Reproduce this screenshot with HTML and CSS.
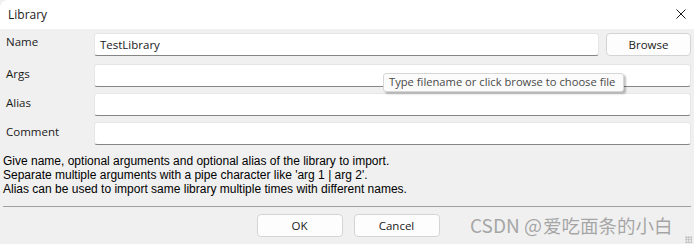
FILE: index.html
```html
<!DOCTYPE html>
<html lang="en">
<head>
  <meta charset="UTF-8" />
  <title>Library</title>
  <link rel="stylesheet" href="styles.css">
</head>
<body>
  <div class="ventana">
    <div class="barra-titulo">
      <span class="titulo">Library</span>
      <svg class="cerrar" width="10" height="10" viewBox="0 0 10 10">
        <path d="M0.5 0.5 L9.5 9.5 M9.5 0.5 L0.5 9.5" stroke="#1a1a1a" stroke-width="1" fill="none"/>
      </svg>
    </div>

    <div class="contenido">
      <div class="campos">
        <label class="etiqueta fila-nombre">Name</label>
        <input class="caja fila-nombre" type="text" value="TestLibrary">
        <button class="boton fila-nombre">Browse</button>

        <label class="etiqueta">Args</label>
        <input class="caja ancha" type="text">

        <label class="etiqueta">Alias</label>
        <input class="caja ancha" type="text">

        <label class="etiqueta">Comment</label>
        <input class="caja ancha" type="text">
      </div>

      <p class="ayuda">
        Give name, optional arguments and optional alias of the library to import.<br>
        Separate multiple arguments with a pipe character like 'arg 1 | arg 2'.<br>
        Alias can be used to import same library multiple times with different names.
      </p>

      <div class="botones">
        <button class="boton">OK</button>
        <button class="boton">Cancel</button>
      </div>
    </div>

    <div class="tooltip">Type filename or click browse to choose file</div>
    <div class="marca">CSDN @<span class="marca-cjk">爱吃面条的小白</span></div>
    <div class="agarre"></div>
  </div>
</body>
</html>
```

FILE: styles.css
```css
html, body {
  margin: 0;
  padding: 0;
  background: #f0f0f0;
}

.ventana {
  position: relative;
  width: 694px;
  height: 244px;
  background: #f0f0f0;
  border-radius: 8px 0 0 8px;
  overflow: hidden;
  font-family: 'Open Sans', 'Noto Sans', sans-serif;
  font-size: 11.5px;
  color: #1a1a1a;
}

.barra-titulo {
  display: flex;
  align-items: center;
  justify-content: space-between;
  height: 29px;
  padding: 0 8px 0 8px;
  background: #ffffff;
  box-sizing: border-box;
}

.titulo {
  font-size: 12px;
  margin-top: -1px;
}

.cerrar {
  margin-top: -1px;
}

.contenido {
  padding: 4px 3px 0 3px;
}

.campos {
  display: grid;
  grid-template-columns: 81px 1fr 85px;
  column-gap: 7px;
  row-gap: 6px;
  padding-left: 3px;
}

.etiqueta {
  align-self: center;
  margin-top: -4px;
}

.fila-nombre {
  margin-bottom: 2px;
}

.etiqueta.fila-nombre {
  margin-top: -6px;
}

.caja {
  height: 23px;
  margin: 0;
  padding: 0 5px;
  border: 1px solid #e6e6e6;
  border-bottom: 1px solid #858585;
  border-radius: 3px;
  background: #ffffff;
  font-family: 'Open Sans', 'Noto Sans', sans-serif;
  font-size: 11.5px;
  color: #1a1a1a;
  box-sizing: border-box;
  outline: none;
}

.caja.ancha {
  grid-column: 2 / 4;
}

.boton {
  height: 23px;
  padding: 0;
  border: 1px solid #d4d4d4;
  border-radius: 4px;
  background: #fdfdfd;
  font-family: 'Open Sans', 'Noto Sans', sans-serif;
  font-size: 11.5px;
  color: #1a1a1a;
}

.ayuda {
  margin: 9px 0 0 0;
  font-family: 'Liberation Sans', Arial, sans-serif;
  font-size: 12px;
  line-height: 14px;
  color: #000000;
  padding-bottom: 10px;
  border-bottom: 1px solid #a0a0a0;
}

.botones {
  display: flex;
  justify-content: center;
  gap: 11px;
  padding-top: 7px;
  padding-left: 2px;
}

.botones .boton {
  width: 86px;
}

.tooltip {
  position: absolute;
  left: 383px;
  top: 73px;
  width: 241px;
  height: 19px;
  box-sizing: border-box;
  background: #fbfbfb;
  border: 1px solid #d6d6d6;
  border-radius: 3px;
  box-shadow: 2px 2px 2px rgba(0, 0, 0, 0.25);
  color: #4a4a4a;
  font-size: 11.2px;
  line-height: 16px;
  padding-left: 5px;
  white-space: nowrap;
}

.marca {
  position: absolute;
  left: 470px;
  top: 211px;
  font-family: 'Noto Sans CJK SC', sans-serif;
  font-size: 19px;
  color: rgba(140, 140, 140, 0.75);
  white-space: nowrap;
}

.marca-cjk {
  font-size: 18.5px;
  margin-left: 1px;
}

.agarre {
  position: absolute;
  right: 2px;
  bottom: 1px;
  width: 7px;
  height: 7px;
  background-image: radial-gradient(circle, #b5b5b5 0.8px, transparent 1px);
  background-size: 2.5px 2.5px;
}
```
